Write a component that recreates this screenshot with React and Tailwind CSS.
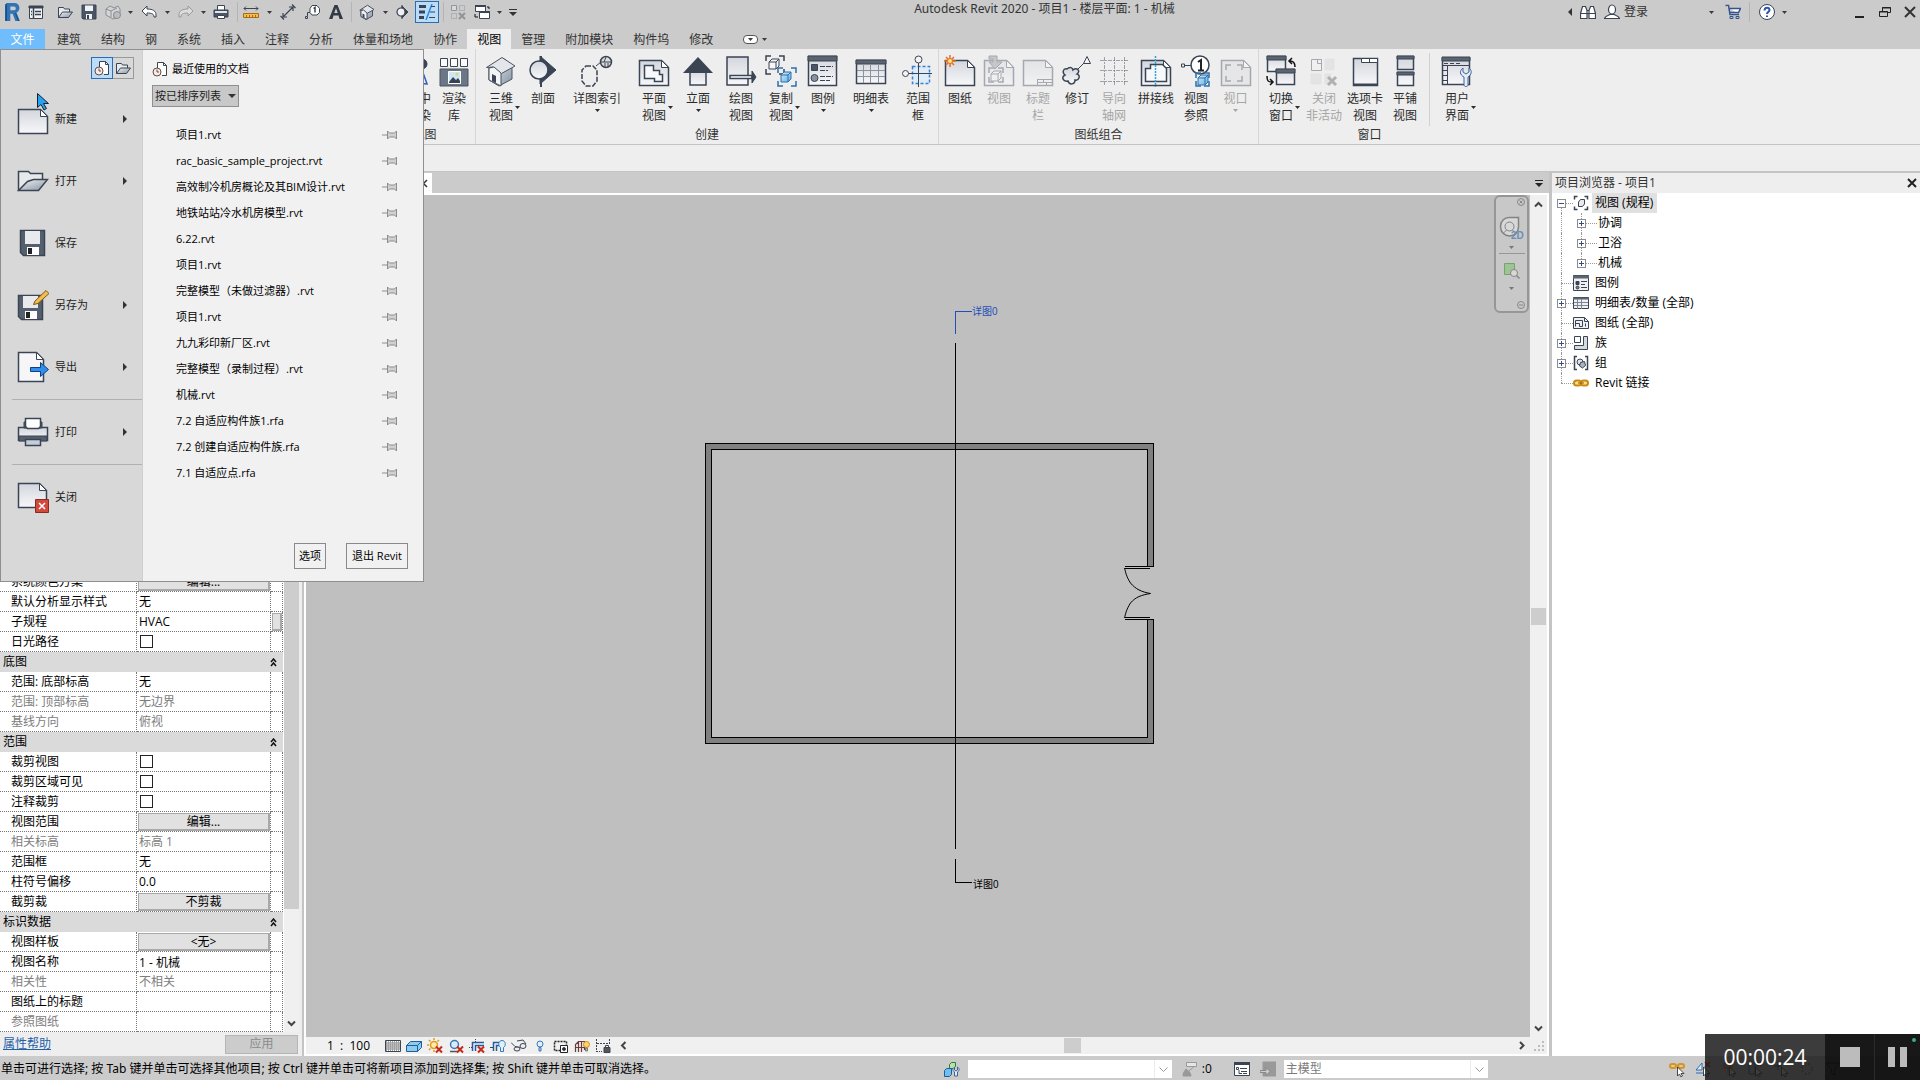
import React from 'react'

const INK = '#3b4453'
const SHEEN = 'url(#sheen)'

function Defs() {
  return (
    <svg className="absolute h-0 w-0" aria-hidden="true">
      <defs>
        <linearGradient id="sheen" x1="0" y1="0" x2="0" y2="1">
          <stop offset="0" stopColor="#d3d6dd" />
          <stop offset="1" stopColor="#f8f8fa" />
        </linearGradient>
        <linearGradient id="steel" x1="0" y1="0" x2="1" y2="1">
          <stop offset="0" stopColor="#f2f4f6" />
          <stop offset="1" stopColor="#8593a3" />
        </linearGradient>
        <linearGradient id="sky" x1="0" y1="0" x2="1" y2="1">
          <stop offset="0" stopColor="#d4ecfa" />
          <stop offset="1" stopColor="#5fb0e0" />
        </linearGradient>
      </defs>
    </svg>
  )
}

function Svg({ size = 16, box, className = '', children }) {
  const b = box || size
  return (
    <svg width={size} height={size} viewBox={`0 0 ${b} ${b}`} fill="none" stroke={INK} className={`shrink-0 ${className}`} aria-hidden="true">
      {children}
    </svg>
  )
}

const Caret = ({ className = 'text-[#3a3a3a]' }) => (
  <svg width="5" height="3" viewBox="0 0 5 3" className={`shrink-0 ${className}`} aria-hidden="true">
    <path d="M0 0h5L2.5 3z" fill="currentColor" />
  </svg>
)

/* ---------- shared shapes ---------- */
const House = () => (
  <>
    <path d="M4 13v12l10 6 13-7V12L20 4z" fill="url(#steel)" stroke="#4a5260" />
    <path d="M1.500 12.500L17 2.500l13 8.500-13.500 7.500L8 12z" fill="#e3e6ea" stroke="#4a5260" />
    <path d="M4 13l5-1 7 6v13l-12-6z" fill="#f3f4f6" stroke="#4a5260" />
    <path d="M7 19l4 2v7l-4-2z" fill="#3b4453" stroke="none" />
  </>
)
const Page = ({ fill = SHEEN }) => (
  <>
    <path d="M1.500 5.500h22l7 7v18h-29z" fill={fill} strokeWidth="1.500" />
    <path d="M23.500 5.500v7h7z" fill="#fff" />
  </>
)
const Corners = ({ x, y, s, c = INK, a = 5 }) => (
  <path d={`M${x} ${y + a}v-${a}h${a}M${x + s - a} ${y}h${a}v${a}M${x + s} ${y + s - a}v${a}h-${a}M${x + a} ${y + s}h-${a}v-${a}`} stroke={c} strokeWidth="1.500" />
)
const Cube = ({ x, y, fill = '#f4f5f7', c = INK }) => (
  <path d={`M${x} ${y + 3}l3-3h7v7l-3 3h-7zM${x} ${y + 3}h7v7M${x + 7} ${y + 3}l3-3`} fill={fill} stroke={c} />
)

/* ---------- ribbon icons, 32 px ---------- */
const ribbonIcons = {
  cloud: (
    <>
      <circle cx="19" cy="9" r="5" fill={INK} />
      <path d="M10 28c0-10 4-13 9-13l4 11 1 3z" fill="#e8eefc" stroke="#2d5cb8" strokeWidth="1.500" />
    </>
  ),
  gallery: (
    <>
      <path d="M2.500 3.500h7v8h-7zM12.500 3.500h7v8h-7zM22.500 3.500h7v8h-7z" fill="#fafafa" />
      <path d="M2 14h28v17H2z" fill="#6b7686" stroke="#4a5260" />
      <path d="M10.500 16.500h12v12h-12z" fill="#cfe6f7" stroke="#fff" />
      <path d="M11 27l4-5 3 3 2-2 2 3v2H11z" fill="#39424f" stroke="none" />
      <circle cx="19" cy="19" r="1.500" fill="#e6d463" stroke="none" />
    </>
  ),
  house: <House />,
  section: (
    <>
      <path d="M13 1l16 14L13 29z" fill={INK} />
      <path d="M14 1v31" strokeWidth="2" />
      <circle cx="12" cy="15" r="9" fill={SHEEN} strokeWidth="1.500" />
    </>
  ),
  callout: (
    <>
      <path d="M6 11h7l4 4v11l-4 5H6l-4-5V15z" strokeDasharray="5 1.500" strokeWidth="1.500" transform="translate(-1 0)" />
      <path d="M15 11l5-4" />
      <circle cx="25" cy="7" r="5.500" fill="#ddd" strokeWidth="1.500" />
      <path d="M20 7h10M25 2l-2 5M24 8v4M27 8v4" />
    </>
  ),
  plan: (
    <>
      <Page />
      <path d="M6.500 10.500h9v5h6v4h3v7h-8v-3h-10z" fill="#f7f8fa" strokeWidth="1.500" />
    </>
  ),
  elevation: (
    <>
      <path d="M8 15h16v15H8z" fill={SHEEN} strokeWidth="1.500" />
      <path d="M16 2L1 18h30z" fill={INK} stroke="none" />
    </>
  ),
  drafting: (
    <>
      <path d="M2 2h21v28H2z" fill={SHEEN} strokeWidth="1.500" />
      <path d="M5 20.500h22v3H5z" fill="#fff" strokeWidth="1.500" />
      <path d="M27 16l4 6-4 6z" fill={INK} />
    </>
  ),
  copy: (
    <>
      <Corners x={1} y={1} s={18} />
      <Cube x={4} y={4} />
      <Corners x={13} y={13} s={18} c="#2d6fae" />
      <Cube x={16} y={17} fill="url(#sky)" c="#2d6fae" />
    </>
  ),
  legend: (
    <>
      <path d="M1.500 1.500h28v29h-28z" fill={SHEEN} strokeWidth="1.500" />
      <path d="M1 1h29v5H1z" fill="#5c6470" />
      <path d="M4.500 9.500h6v6h-6z" fill="#4b5563" />
      <circle cx="7.500" cy="23" r="3.500" fill="#8a929e" />
      <path d="M13 11.500h13M13 15.500h8M13 21.500h13M13 25.500h10" strokeDasharray="5 1" />
    </>
  ),
  schedule: (
    <>
      <path d="M1.500 5.500h29v23h-29z" fill={SHEEN} strokeWidth="1.500" />
      <path d="M1 5h30v4H1z" fill="#5c6470" />
      <path d="M2 15.500h28M2 21.500h28M8.500 9v19M15.500 9v19M23.500 9v19" stroke="#8a93a0" />
    </>
  ),
  scope: (
    <>
      <path d="M10.500 11.500h17v17h-17z" fill="#dcecf9" stroke="#3d7fd0" strokeWidth="1.500" strokeDasharray="3 2" />
      <path d="M16.500 8v24M6 18.500h24" />
      <circle cx="16.500" cy="4.500" r="3.500" fill="#f4f4f4" />
      <circle cx="3.500" cy="18.500" r="3" fill="#f4f4f4" />
    </>
  ),
  sheet: (
    <>
      <Page />
      <path d="M6 0v12M0 6h12M2 2l8 8M10 2l-8 8" stroke="#e2702a" strokeWidth="1.500" />
      <circle cx="6" cy="6" r="2.500" fill="#ffe27a" stroke="#e2702a" />
    </>
  ),
  placeView: (
    <g opacity="0.400">
      <Page />
      <Corners x={6} y={13} s={14} />
      <Cube x={8} y={16} />
      <path d="M6 1h8v6h5l-7 7-6-7h4V4H6z" fill="#8b8f96" />
    </g>
  ),
  titleBlock: (
    <g opacity="0.400">
      <Page />
      <path d="M15 24.500h15M15 27.500h15M15.500 24v6M21.500 24v3M24.500 27v3" />
    </g>
  ),
  revision: (
    <>
      <path d="M16 15l9-9" />
      <path d="M26 1.500l-3.500 7h7z" fill="#f4f4f4" />
      <path d="M6 14c3-3 6-1 6 1 4-3 8 1 4 4 4 1 2 7-2 6 0 5-6 5-7 1-5 1-7-4-3-6-3-2-2-7 2-6z" fill={SHEEN} strokeWidth="1.500" />
    </>
  ),
  grid: (
    <g opacity="0.450">
      <path d="M2 5.500h28M2 15.500h28M2 26.500h28M6.500 2v28M16.500 2v28M26.500 2v28" strokeDasharray="4 1 2 1" />
    </g>
  ),
  matchline: (
    <>
      <Page />
      <path d="M5.500 26.500v-13h5v-4h12l4 4v13z" fill="#f7f8fa" strokeWidth="1.500" />
      <path d="M15.500 1v31" stroke="#2fa0d8" strokeWidth="1.500" strokeDasharray="2 1" />
    </>
  ),
  viewRef: (
    <>
      <path d="M4 10.500h8M1.500 9h3v3h-3z" />
      <circle cx="20" cy="10" r="9" fill="#fff" strokeWidth="1.500" />
      <path d="M18 7l3-2v10M18 15.500h6" strokeWidth="2" stroke="#222" />
      <Corners x={16} y={18} s={13} c="#2d6fae" />
      <Cube x={18} y={20} fill="url(#sky)" c="#2d6fae" />
    </>
  ),
  viewport: (
    <g opacity="0.400">
      <Page fill="#dcdcdc" />
      <Corners x={6} y={10} s={16} />
    </g>
  ),
  switchWin: (
    <>
      <path d="M2.500 1.500h18v15h-18z" fill={SHEEN} strokeWidth="1.500" />
      <path d="M2 1h19v4H2z" fill="#5c6470" />
      <path d="M11.500 14.500h18v15h-18z" fill={SHEEN} strokeWidth="1.500" />
      <path d="M11 14h19v4H11z" fill="#5c6470" />
      <path d="M30 12c0-5-2-6-5-6M27 3l-3 3 3 3M2 21c0 5 1 6 5 6M5 24l3 3-3 3" stroke="#111" strokeWidth="1.500" />
    </>
  ),
  closeWin: (
    <g opacity="0.400">
      <path d="M3.500 4.500h10v11h-10z" fill="#f3f3f3" />
      <path d="M9.500 4.500h4v4h-4z" />
      <path d="M17 4h9v11h-9zM3 19h10v10H3zM17 19h6v10h-6z" fill="#d5d5d5" stroke="#d5d5d5" />
      <path d="M20 22l8 8M28 22l-8 8" stroke="#555" strokeWidth="3" />
    </g>
  ),
  tabView: (
    <>
      <path d="M4.500 3.500h24v27h-24z" fill={SHEEN} strokeWidth="1.500" />
      <path d="M12.500 3.500h16v4h-16zM20.500 3.500v4" fill="#fff" />
      <path d="M4 29.500h25" strokeWidth="2" />
    </>
  ),
  tile: (
    <>
      <path d="M8.500 1.500h16v13h-16zM8.500 17.500h16v13h-16z" fill={SHEEN} strokeWidth="1.500" />
      <path d="M8 1h17v3H8zM8 17h17v3H8z" fill="#5c6470" />
    </>
  ),
  userUi: (
    <>
      <path d="M1.500 3.500h27v26h-27z" fill={SHEEN} strokeWidth="1.500" />
      <path d="M1 2h28v4H1z" fill="#5c6470" />
      <path d="M1 10.500h28M3 8.500h4M9 8.500h4M15 8.500h4M6.500 11v18M2 15.500h4M2 20.500h4M2 25.500h4" />
      <path d="M22 13v4l3 2 3-2v-4c4 3 2 7-1 9v8c0 2-4 2-4 0v-8c-4-2-5-6-1-9z" fill="#e6edf5" stroke="#41639c" />
    </>
  ),
}

/* ---------- quick access icons, 16 px ---------- */
const Chevron = ({ d }) => (
  <svg width="9" height="9" viewBox="0 0 9 9" fill="none" stroke="#444" strokeWidth="2" aria-hidden="true">
    <path d={d} />
  </svg>
)

const small = {
  logo: (
    <>
      <path d="M3 0h7c5.500 0 6 7 2 8.500L15 16h-4L8.500 9.500H6.500V16H2V2z" fill="#2f74b5" stroke="none" />
      <path d="M2 1h1.500v15H2z" fill="#174f86" stroke="none" />
      <path d="M6.500 3h3c2.500 0 2.500 3.500 0 3.500h-3z" fill="#cbcbcb" stroke="none" />
      <path d="M11 9l3 7" stroke="#174f86" />
    </>
  ),
  props: (
    <>
      <path d="M1.500 2.500h13v12h-13z" fill="#f3f3f3" />
      <path d="M1 2h14v2H1z" fill={INK} />
      <path d="M5.500 4v10M3 7.500h1M3 10.500h1M7 7.500h6M7 10.500h6" strokeWidth="1.500" />
    </>
  ),
  open: (
    <>
      <path d="M1.500 13.500v-10h5l1 1.500h5v3" fill="#e9ebee" />
      <path d="M1.500 13.500l4-5.500h10l-4 5.500z" fill="url(#steel)" />
    </>
  ),
  save: (
    <>
      <path d="M1 1h14v14H2l-1-1z" fill="#4b5563" />
      <path d="M4 1.500h8v5.500H4zM5 10h6v5H5z" fill="#f0f2f4" stroke="none" />
      <path d="M6 11h2v4H6z" fill={INK} stroke="none" />
    </>
  ),
  sync: (
    <g opacity="0.450">
      <path d="M1 5l4-3 4 2 4-2 2 3v4l-3 5-4 1-7-4z" fill="#e2e2e2" />
      <path d="M1 5l5 2v6M6 7l6-3M9 9v5" />
      <circle cx="12" cy="11" r="3.500" fill="#aaa" />
    </g>
  ),
  undo: <path d="M1 7l5-5v3c6 0 9 2 9 6v2h-2c0-3-2-4-7-4v3z" fill="#fff" />,
  redo: <path d="M15 7l-5-5v3c-6 0-9 2-9 6v2h2c0-3 2-4 7-4v3z" fill="#ddd" stroke="#9a9a9a" />,
  print: (
    <>
      <path d="M4.500 1.500h7v5h-7z" fill="#fff" />
      <path d="M1 6h14v7H1z" fill="#4b5563" />
      <path d="M2 7h12v2H2z" fill="#e2e5e9" stroke="none" />
      <path d="M4.500 11.500h7v3h-7z" fill="#fff" />
    </>
  ),
  measure: (
    <>
      <path d="M1 4.500h14M3 2.500l-2 2 2 2M13 2.500l2 2-2 2" />
      <path d="M.500 9.500h15v4H.500z" fill="#f5bd4a" stroke="#a86a12" />
      <path d="M3.500 11v2M6.500 11v2M9.500 11v2M12.500 11v2" stroke="#a86a12" />
    </>
  ),
  dim: <path d="M3 13L13 3M9 3h4v4M3 9v4h4M0.500 12l3.500 3.500M12 .500L15.500 4" strokeWidth="1.200" />,
  tag: (
    <>
      <path d="M1.500 12.500h2v2h-2zM3.500 12V8.500H6" />
      <path d="M8 1.500h5l2.500 3v4L13 11H8L6 8.500v-4z" fill="#fff" />
      <path d="M9.500 4.500L11 3.500v5" strokeWidth="1.500" />
    </>
  ),
  text: <path d="M1 15L6.500 1h3L15 15h-3.500l-1-3.500h-5l-1 3.500zM6.300 9h3.400L8 4z" fill="#333a45" stroke="none" />,
  section: (
    <>
      <path d="M8 2l6 6-6 6z" fill={INK} />
      <path d="M8 1v14" />
      <circle cx="7" cy="8" r="4" fill="#eef0f2" strokeWidth="1.200" />
    </>
  ),
  thin: (
    <>
      <path d="M0 2.500h7M0 8h6M0 13.500h5" strokeWidth="3" />
      <path d="M7 16L13 0" stroke="#2f8ae0" strokeWidth="1.500" />
      <path d="M12 2.500h4M11 8h5M10 13.500h6" />
    </>
  ),
  closeHidden: (
    <g opacity="0.400">
      <path d="M1.500 1.500h5v5h-5z" fill="#eee" />
      <path d="M9.500 1.500h5v5h-5zM1.500 9.500h5v5h-5z" strokeDasharray="1 1" />
      <path d="M9 9l6 6M15 9l-6 6" strokeWidth="2" />
    </g>
  ),
  switchWin: (
    <>
      <path d="M1.500 1.500h10v6h-10z" fill="#fff" />
      <path d="M5.500 7.500h10v7h-10z" fill="#fff" />
      <path d="M1 2h11M5 8h11" strokeWidth="2" />
      <path d="M1 10v3h3M15 5V3h-2" stroke="#111" />
    </>
  ),
  doc: (
    <>
      <path d="M5.500 7V1.500h6l3 3v10H10" fill="#fff" />
      <path d="M11.500 1.500v3h3" />
      <circle cx="5" cy="11" r="4" fill="#f4ece6" stroke="#6a4a40" />
      <path d="M5 8.500V11h2" stroke="#6a4a40" />
    </>
  ),
}

const QButton = ({ icon, label, className = 'w-6' }) => (
  <button aria-label={label} className={`flex h-[22px] shrink-0 items-center justify-center ${className}`}>
    <Svg>{small[icon]}</Svg>
  </button>
)
const QCaret = ({ label, className = '' }) => (
  <button aria-label={label} className={`flex h-[22px] w-[10px] shrink-0 items-center justify-center ${className}`}>
    <Caret />
  </button>
)
const QSep = ({ className }) => <span className={`h-5 w-px shrink-0 bg-[#b4b4b4] ${className}`} />

function TitleBar() {
  return (
    <header className="flex h-[29px] shrink-0 items-start bg-[#cbcbcb] pt-px">
      <div className="flex shrink-0 items-center">
        <button aria-label="Revit" className="flex h-[22px] w-6 items-center justify-center">
          <Svg size={18} box={16}>{small.logo}</Svg>
        </button>
        <QButton icon="props" label="属性" className="ml-0.5 w-5" />
        <QButton icon="open" label="打开" className="ml-[7px] w-6" />
        <QButton icon="save" label="保存" />
        <QButton icon="sync" label="同步" />
        <QCaret label="同步选项" />
        <QButton icon="undo" label="放弃" className="ml-0.5 w-6" />
        <QCaret label="放弃列表" className="ml-px" />
        <QButton icon="redo" label="重做" className="ml-0.5 w-6" />
        <QCaret label="重做列表" />
        <QButton icon="print" label="打印" className="ml-px w-6" />
        <QSep className="ml-1" />
        <QButton icon="measure" label="测量" className="ml-px w-6" />
        <QCaret label="测量选项" className="ml-px" />
        <QButton icon="dim" label="对齐尺寸标注" className="ml-0.5 w-6" />
        <QButton icon="tag" label="按类别标记" />
        <QButton icon="text" label="文字" />
        <QSep className="ml-[3px]" />
        <button aria-label="默认三维视图" className="ml-[3px] flex h-[22px] w-6 items-center justify-center">
          <Svg size={16} box={32}>
            <g strokeWidth="2"><House /></g>
          </Svg>
        </button>
        <QCaret label="三维视图选项" className="ml-px" />
        <QButton icon="section" label="剖面" />
        <QButton icon="thin" label="细线" className="ml-px w-6 border border-[#2c6cb0] bg-[#b9dcfb]" />
        <QSep className="ml-1" />
        <QButton icon="closeHidden" label="关闭非活动视图" className="ml-0.5 w-6" />
        <QButton icon="switchWin" label="切换窗口" />
        <QCaret label="窗口列表" />
        <button aria-label="自定义快速访问工具栏" className="ml-px flex h-[22px] w-4 flex-col items-center justify-center gap-0.5">
          <span className="h-px w-2 bg-[#333]" />
          <svg width="8" height="4" viewBox="0 0 8 4"><path d="M0 0h8L4 4z" fill="#333" /></svg>
        </button>
      </div>
      <h1 className='min-w-0 flex-1 truncate text-center font-["Noto_Sans","Noto_Sans_CJK_SC",sans-serif] text-xs leading-4 text-[#333]'>
        Autodesk Revit 2020 - 项目1 - 楼层平面: 1 - 机械
      </h1>
      <div className="flex h-[22px] shrink-0 items-center text-[#333]">
        <svg width="4" height="8" viewBox="0 0 4 8" className="mr-2" aria-hidden="true"><path d="M4 0v8L0 4z" fill="#333" /></svg>
        <button aria-label="搜索" className="w-6">
          <Svg>
            <path d="M.500 14.500v-5l2-7h3l1.500 4v8zM15.500 14.500v-5l-2-7h-3L9 6.500v8zM7 6.500h2v3H7zM.500 9.500H7M9 9.500h6.500" fill="#fff" strokeWidth="1.200" />
          </Svg>
        </button>
        <button className="flex items-center gap-1 text-xs">
          <Svg>
            <ellipse cx="8" cy="5.500" rx="3.500" ry="4.500" fill="#fff" strokeWidth="1.200" />
            <path d="M.500 14.500c1-3 4-3 5.500-4h4c1.500 1 4.500 1 5.500 4z" fill="#fff" strokeWidth="1.200" />
          </Svg>
          登录
        </button>
        <button aria-label="登录选项" className="ml-[61px] flex h-5 w-2 items-center"><Caret /></button>
        <button aria-label="App Store" className="ml-2">
          <Svg>
            <path d="M.500 1.500h3l1.500 9h9M4 4.500h11.500l-2 4H5" fill="#fff" stroke="#35548c" strokeWidth="1.500" />
            <path d="M5 12.500h3v2H5zM11 12.500h3v2h-3z" stroke="#35548c" />
          </Svg>
        </button>
        <span className="ml-2 h-5 w-px bg-[#b4b4b4]" />
        <button aria-label="帮助" className="ml-[9px]">
          <Svg>
            <circle cx="8" cy="8" r="7.500" fill="#fff" />
            <path d="M5.500 6.500c0-4 5-3.500 5-.500 0 2-2.500 2-2.500 4M8 11.500v1.500" stroke="#2b55a8" strokeWidth="2" />
          </Svg>
        </button>
        <button aria-label="帮助选项" className="ml-[7px] flex h-5 w-2 items-center"><Caret /></button>
        <button aria-label="最小化" className="ml-[62px] w-5">
          <Svg size={14}><path d="M3 12h9" stroke="#222" strokeWidth="2" /></Svg>
        </button>
        <button aria-label="还原" className="ml-1.5 w-5">
          <Svg size={14}>
            <path d="M1.500 6.500h8v5h-8zM4.500 6V2.500h8v5H10" stroke="#222" />
            <path d="M1 7h9M4 3h9" stroke="#222" />
          </Svg>
        </button>
        <button aria-label="关闭" className="mr-1 ml-1.5 w-3">
          <Svg size={12}><path d="M1 1l10 10M11 1L1 11" stroke="#333" strokeWidth="2" /></Svg>
        </button>
      </div>
    </header>
  )
}

const TABS = ['建筑', '结构', '钢', '系统', '插入', '注释', '分析', '体量和场地', '协作', '视图', '管理', '附加模块', '构件坞', '修改']

function TabStrip() {
  return (
    <nav className="flex h-5 shrink-0 bg-[#cbcbcb] text-xs leading-[22px] text-[#333]">
      <button className="mr-0.5 w-[45px] bg-[#6fbdfc] text-white">文件</button>
      {TABS.map((t) => (
        <button key={t} className={t === '视图' ? 'bg-[#eeeeee] px-2.5 text-black' : 'px-2.5'}>{t}</button>
      ))}
      <button aria-label="最小化功能区" className="ml-5 flex items-center gap-1">
        <span className="flex h-[9px] w-[15px] items-center justify-center rounded-sm border border-[#555] bg-white">
          <Caret />
        </span>
        <Caret />
      </button>
    </nav>
  )
}

function RibbonButton({ icon, lines, width, drop, off }) {
  return (
    <button disabled={off} className={`flex shrink-0 flex-col items-center ${width} ${off ? 'text-[#a6a6a6]' : 'text-[#2b2b2b]'}`}>
      <Svg size={32}>{ribbonIcons[icon]}</Svg>
      <span className="relative mt-[3px] text-xs leading-[17px] whitespace-nowrap">
        {lines.map((l) => (
          <span key={l} className="block">{l}</span>
        ))}
        {drop && lines.length > 1 && <span className="absolute top-4 left-full ml-0.5"><Caret className="text-current" /></span>}
      </span>
      {drop && lines.length === 1 && <span className="mt-0.5"><Caret className="text-current" /></span>}
    </button>
  )
}

function RibbonGroup({ title, children, last }) {
  return (
    <section className={`flex shrink-0 flex-col justify-between pt-1.5 pb-px ${last ? '' : 'border-r border-[#d6d6d6]'}`}>
      <div className="flex">{children}</div>
      <h2 className="text-center text-xs leading-[17px] text-[#333]">{title}</h2>
    </section>
  )
}

function Ribbon() {
  return (
    <div className="flex h-24 shrink-0 border-b border-[#c4c4c4] bg-[#eeeeee] pl-[350px]">
      <RibbonGroup title="演示视图">
        <div className="w-[54px]" />
        <RibbonButton icon="cloud" lines={['云中', '渲染']} width="w-[30px]" />
        <RibbonButton icon="gallery" lines={['渲染', '库']} width="w-10" />
        <div className="w-px" />
      </RibbonGroup>
      <RibbonGroup title="创建">
        <RibbonButton icon="house" lines={['三维', '视图']} width="w-[50px]" drop />
        <RibbonButton icon="section" lines={['剖面']} width="w-[34px]" />
        <RibbonButton icon="callout" lines={['详图索引']} width="w-[74px]" drop />
        <RibbonButton icon="plan" lines={['平面', '视图']} width="w-[40px]" drop />
        <RibbonButton icon="elevation" lines={['立面']} width="w-[48px]" drop />
        <RibbonButton icon="drafting" lines={['绘图', '视图']} width="w-[38px]" />
        <RibbonButton icon="copy" lines={['复制', '视图']} width="w-[42px]" drop />
        <RibbonButton icon="legend" lines={['图例']} width="w-[42px]" drop />
        <RibbonButton icon="schedule" lines={['明细表']} width="w-[54px]" drop />
        <RibbonButton icon="scope" lines={['范围', '框']} width="w-[40px]" />
      </RibbonGroup>
      <RibbonGroup title="图纸组合">
        <RibbonButton icon="sheet" lines={['图纸']} width="w-[42px]" />
        <RibbonButton icon="placeView" lines={['视图']} width="w-[36px]" off />
        <RibbonButton icon="titleBlock" lines={['标题', '栏']} width="w-[42px]" off />
        <RibbonButton icon="revision" lines={['修订']} width="w-[36px]" />
        <RibbonButton icon="grid" lines={['导向', '轴网']} width="w-[38px]" off />
        <RibbonButton icon="matchline" lines={['拼接线']} width="w-[46px]" />
        <RibbonButton icon="viewRef" lines={['视图', '参照']} width="w-[34px]" />
        <RibbonButton icon="viewport" lines={['视口']} width="w-[45px]" drop off />
      </RibbonGroup>
      <RibbonGroup title="窗口" last>
        <RibbonButton icon="switchWin" lines={['切换', '窗口']} width="w-[44px]" drop />
        <RibbonButton icon="closeWin" lines={['关闭', '非活动']} width="w-[42px]" off />
        <RibbonButton icon="tabView" lines={['选项卡', '视图']} width="w-[40px]" />
        <RibbonButton icon="tile" lines={['平铺', '视图']} width="w-[40px]" />
        <span className="mx-1 -my-0.5 w-px bg-[#d0d0d0]" />
        <RibbonButton icon="userUi" lines={['用户', '界面']} width="w-[46px]" drop />
      </RibbonGroup>
    </div>
  )
}

/* ---------- application menu ---------- */
const menuIcons = {
  new: (
    <>
      <path d="M1.500 6.500h22l7 7v17h-29z" fill={SHEEN} strokeWidth="1.500" />
      <path d="M23.500 6.500v7h7z" fill="#fff" />
    </>
  ),
  open: (
    <>
      <path d="M1.500 25.500v-19h10l2 2h12v7" fill="#e6e9ec" strokeWidth="1.500" />
      <path d="M1.500 25.500l9-9 6-2h14l-9 11z" fill="url(#steel)" strokeWidth="1.500" />
    </>
  ),
  save: (
    <>
      <path d="M3.500 3.500h24v25h-21l-3-3z" fill="#55606f" strokeWidth="1.500" />
      <path d="M8 4h15v13H8z" fill="#e8eaee" stroke="none" />
      <path d="M10 20h12v8H10z" fill="#fff" stroke="none" />
      <path d="M11 21h4v6h-4z" fill="#222" stroke="none" />
    </>
  ),
  saveAs: (
    <>
      <path d="M1.500 6.500h24v24h-21l-3-3z" fill="#55606f" strokeWidth="1.500" />
      <path d="M6 7h15v12H6z" fill="#e8eaee" stroke="none" />
      <path d="M8 22h12v8H8z" fill="#fff" stroke="none" />
      <path d="M9 23h4v6H9z" fill="#222" stroke="none" />
      <path d="M18 12L29 1.500l3 3L21 14.500l-4.500 1z" fill="#f3bd4b" stroke="#7d5520" />
    </>
  ),
  export: (
    <>
      <path d="M1.500 1.500h18l7 7v22h-25z" fill="#f6f6f8" strokeWidth="1.500" />
      <path d="M19.500 1.500v7h7z" fill="#fff" />
      <path d="M13.500 16.500h10v-5l8 7-8 7v-5h-10z" fill="#2f8df0" stroke="#123f7c" />
    </>
  ),
  print: (
    <>
      <path d="M1.500 11.500h29v13h-29z" fill="url(#sheen)" strokeWidth="1.500" />
      <path d="M2 20h28v5H2z" fill="#55606f" />
      <path d="M7 6h18v6H7z" fill="#55606f" />
      <path d="M8.500 2.500h15v8l-2 2h-11l-2-2z" fill="#fff" strokeWidth="1.500" />
      <path d="M8.500 23.500h15v6h-15z" fill="#c4ced9" strokeWidth="1.500" />
    </>
  ),
  close: (
    <>
      <path d="M1.500 2.500h21l7 7v17h-28z" fill={SHEEN} strokeWidth="1.500" />
      <path d="M22.500 2.500v7h7z" fill="#fff" />
      <path d="M18.500 18.500h13v13h-13z" fill="#d0493c" stroke="#8c2a20" />
      <path d="M22 22l6 6M28 22l-6 6" stroke="#fff" strokeWidth="1.500" />
    </>
  ),
}

function MenuItem({ icon, label, arrow }) {
  return (
    <button className="flex h-[62px] w-full items-center pl-4 text-left text-[11px] text-[#222]">
      <Svg size={32}>{menuIcons[icon]}</Svg>
      <span className="ml-1.5 flex-1">{label}</span>
      {arrow && (
        <svg width="4" height="8" viewBox="0 0 4 8" className="mr-[15px]" aria-hidden="true"><path d="M0 0v8l4-4z" fill="#333" /></svg>
      )}
    </button>
  )
}

const RECENT = [
  '项目1.rvt', 'rac_basic_sample_project.rvt', '高效制冷机房概论及其BIM设计.rvt', '地铁站站冷水机房模型.rvt', '6.22.rvt', '项目1.rvt',
  '完整模型（未做过滤器）.rvt', '项目1.rvt', '九九彩印新厂区.rvt', '完整模型（录制过程）.rvt', '机械.rvt', '7.2 自适应构件族1.rfa',
  '7.2 创建自适应构件族.rfa', '7.1 自适应点.rfa',
]

function AppMenu() {
  return (
    <div className="absolute top-[49px] left-0 z-10 flex h-[533px] w-[424px] border border-[#8f8f8f] bg-[#f1f1f1] text-[11px]">
      <div className="w-[142px] shrink-0 border-r border-[#cfcfcf] bg-[#d8d8d8]">
        <div className="mt-[7px] mr-2 mb-[9px] flex h-[22px] justify-end">
          <button aria-label="最近使用的文档" className="flex w-[22px] items-center justify-center border border-[#2c6cb0] bg-[#b9dcfb]"><Svg>{small.doc}</Svg></button>
          <button aria-label="打开的文档" className="flex w-[21px] items-center justify-center border border-l-0 border-[#999]"><Svg>{small.open}</Svg></button>
        </div>
        <MenuItem icon="new" label="新建" arrow />
        <MenuItem icon="open" label="打开" arrow />
        <MenuItem icon="save" label="保存" />
        <MenuItem icon="saveAs" label="另存为" arrow />
        <MenuItem icon="export" label="导出" arrow />
        <hr className="my-px ml-[11px] border-[#b0b0b0]" />
        <MenuItem icon="print" label="打印" arrow />
        <hr className="my-px ml-[11px] border-[#b0b0b0]" />
        <MenuItem icon="close" label="关闭" />
      </div>
      <div className="flex flex-1 flex-col pl-[9px]">
        <h2 className="mt-[11px] flex h-4 items-center gap-1 text-black"><Svg>{small.doc}</Svg>最近使用的文档</h2>
        <button className="mt-2 flex h-[22px] w-[87px] items-center justify-between border border-[#8f8f8f] bg-[#c8c8c8] pr-0.5 pl-0.5 text-[#222]">
          按已排序列表
          <svg width="8" height="4" viewBox="0 0 8 4" aria-hidden="true"><path d="M0 0h8L4 4z" fill="#333" /></svg>
        </button>
        <ul className="mt-[15px]">
          {RECENT.map((name, i) => (
            <li key={i} className="flex h-[26px] items-center justify-between pr-[25px] pl-6 text-black">
              <a href="#" className="whitespace-nowrap">{name}</a>
              <button aria-label={`固定 ${name}`}>
                <svg width="16" height="10" viewBox="0 0 16 10" fill="none" stroke="#8d8d8d" aria-hidden="true">
                  <path d="M0 5h5" />
                  <path d="M5.500 1v8l2-2h5l2 2V1l-2 2h-5z" fill="#d0d0d0" />
                </svg>
              </button>
            </li>
          ))}
        </ul>
        <div className="mt-auto mr-[15px] mb-3 flex justify-end gap-5">
          <button className="h-[26px] w-8 border border-[#8a8a8a] text-black">选项</button>
          <button className="h-[26px] w-[62px] border border-[#8a8a8a] whitespace-nowrap text-black">退出 Revit</button>
        </div>
      </div>
    </div>
  )
}

/* ---------- property palette ---------- */
const PROPS = [
  ['系统颜色方案', 'button', '编辑...'],
  ['默认分析显示样式', 'text', '无'],
  ['子规程', 'text', 'HVAC', false, true],
  ['日光路径', 'check'],
  ['底图', 'head'],
  ['范围: 底部标高', 'text', '无'],
  ['范围: 顶部标高', 'text', '无边界', true],
  ['基线方向', 'text', '俯视', true],
  ['范围', 'head'],
  ['裁剪视图', 'check'],
  ['裁剪区域可见', 'check'],
  ['注释裁剪', 'check'],
  ['视图范围', 'button', '编辑...'],
  ['相关标高', 'text', '标高 1', true],
  ['范围框', 'text', '无'],
  ['柱符号偏移', 'input', '0.0'],
  ['截剪裁', 'button', '不剪裁'],
  ['标识数据', 'head'],
  ['视图样板', 'button', '<无>'],
  ['视图名称', 'input', '1 - 机械'],
  ['相关性', 'text', '不相关', true],
  ['图纸上的标题', 'input', ''],
  ['参照图纸', 'text', '', true],
]

const CELL = 'h-5 border-b border-r border-dotted border-[#777] p-0'

function PropRow({ row }) {
  const [name, kind, value, off, handle] = row
  if (kind === 'head') {
    return (
      <tr>
        <th colSpan={3} className="h-5 bg-[#dadada] p-0 font-normal">
          <div className="flex h-5 items-center justify-between pr-[6px] pl-[3px]">
            {name}
            <svg width="7" height="9" viewBox="0 0 7 9" fill="none" stroke="#111" strokeWidth="1.500" aria-hidden="true"><path d="M1 4l2.500-3L6 4M1 8l2.500-3L6 8" /></svg>
          </div>
        </th>
      </tr>
    )
  }
  return (
    <tr className={off ? 'text-[#7d7d7d]' : 'text-black'}>
      <th scope="row" className={`${CELL} pl-[11px] text-left font-normal`}>{name}</th>
      <td className={CELL}>
        {kind === 'text' && <span className="ml-0.5">{value}</span>}
        {kind === 'input' && <input aria-label={name} defaultValue={value} className="block h-[19px] w-full bg-transparent pl-0.5 outline-none" />}
        {kind === 'check' && <input type="checkbox" aria-label={name} className="mx-[3px] my-[3px] block size-[13px] appearance-none border border-[#222] bg-white" />}
        {kind === 'button' && <button className="ml-px block h-[18px] w-[132px] border-t border-r-2 border-b-2 border-l border-[#a8a8a8] bg-[#e1e1e1] leading-[15px]">{value}</button>}
      </td>
      <td className={CELL}>
        {handle && <span className="ml-px block h-[18px] w-[10px] border-t border-r-2 border-b-2 border-l border-[#a8a8a8] bg-[#e1e1e1]" />}
      </td>
    </tr>
  )
}

function PropertyPalette() {
  return (
    <aside className="flex w-[304px] shrink-0 flex-col border-r-2 border-[#c4c4c4] bg-[#eeeeee] text-xs leading-[18px]">
      <div className="flex min-h-0 flex-1">
        <div className="flex w-[284px] flex-col justify-end overflow-hidden bg-white">
          <table className="w-[283px] table-fixed border-separate border-spacing-0">
            <colgroup>
              <col className="w-[137px]" />
              <col className="w-[134px]" />
              <col className="w-[12px]" />
            </colgroup>
            <tbody>
              {PROPS.map((r) => <PropRow key={r[0]} row={r} />)}
            </tbody>
          </table>
        </div>
        <div className="flex w-[15px] flex-col bg-[#f0f0f0]">
          <div className="flex-1 bg-[#cdcdcd]" />
          <div className="flex h-[123px] items-end justify-center pb-1"><Chevron d="M1 2.500l3.500 3.500L8 2.500" /></div>
        </div>
      </div>
      <div className="flex h-6 shrink-0 items-center justify-between pr-1 pl-[3px]">
        <a href="#" className="text-[#1f5fa8] underline">属性帮助</a>
        <button disabled className="h-[19px] w-[73px] border border-[#b5b5b5] bg-[#cccccc] leading-4 text-[#8a8a8a]">应用</button>
      </div>
    </aside>
  )
}

/* ---------- drawing area ---------- */
function FloorPlan() {
  return (
    <svg viewBox="306 195 1224 842" className="block h-full w-full" fill="none" stroke="#000" shapeRendering="crispEdges" role="img" aria-label="楼层平面">
      <path d="M1153.500 566.500V443.500H705.500V743.500H1153.500V619.500H1147.500V737.500H711.500V449.500H1147.500V566.500Z" fill="#808080" />
      <path d="M1124.500 566.500h29M1124.500 568.500h25M1124.500 619.500h29M1124.500 617.500h25" />
      <path d="M1124.500 568c1 4 2 9 6 15 5 6 11 9 20 10.500M1124.500 618c1-4 2-9 6-15 5-6 11-8 20-9.500" shapeRendering="auto" />
      <path d="M955.500 343V849M955.500 859V882.500H972" />
      <path d="M955.500 334V311.500H972" stroke="#2350b8" />
      <g stroke="none" fontSize="10" fontFamily='"Liberation Sans", "Noto Sans CJK SC", sans-serif'>
        <text x="972" y="315" fill="#2350b8">详图0</text>
        <text x="973" y="888" fill="#000">详图0</text>
      </g>
    </svg>
  )
}

function NavBar() {
  return (
    <div className="absolute top-0 right-px flex h-[118px] w-[35px] flex-col items-center rounded-md border-2 border-[#969696] bg-[#c8c8c8]">
      <button aria-label="关闭导航栏" className="mt-px mr-0.5 self-end">
        <Svg size={8}><circle cx="4" cy="4" r="3.500" stroke="#888" /><path d="M2.500 2.500l3 3M5.500 2.500l-3 3" stroke="#888" /></Svg>
      </button>
      <button aria-label="二维控制盘" className="mt-2.5">
        <svg width="26" height="24" viewBox="0 0 26 24" fill="none" stroke="#828282" aria-hidden="true">
          <path d="M10 1.500h9.500V11c0 5-4 9-9 9s-9-4-9-9.500 4-9 8.500-9z" fill="#d8d8d8" strokeWidth="1.500" />
          <circle cx="10.500" cy="10.500" r="4.500" />
          <path d="M7.500 14l-3 3M13.500 14l2 2" />
          <text x="12" y="23" fontSize="10" fontWeight="700" fill="#6d8fb5" stroke="none" fontFamily="Liberation Sans">2D</text>
        </svg>
      </button>
      <span className="mt-1.5"><Caret className="text-[#777]" /></span>
      <hr className="mt-1 w-[26px] border-[#979797]" />
      <button aria-label="缩放" className="mt-2">
        <Svg size={17}>
          <path d="M1.500 1.500h10v11h-10z" fill="#9cc594" stroke="#7aa072" />
          <circle cx="11" cy="11" r="3.500" fill="#d8d8d8" stroke="#858585" />
          <path d="M13.500 13.500l3 3" stroke="#858585" strokeWidth="1.500" />
        </Svg>
      </button>
      <span className="mt-2"><Caret className="text-[#777]" /></span>
      <button aria-label="自定义导航栏" className="mt-auto mr-0.5 mb-0.5 self-end">
        <Svg size={8}><circle cx="4" cy="4" r="3.500" stroke="#888" /><path d="M2 4h4" stroke="#888" /></Svg>
      </button>
    </div>
  )
}

const BULB = 'M10.500 9.500c-3-2-2-7 1.500-7s4.500 5 1.500 7v4h-3z'
const RED_X = <path d="M9 8.500l6 6M15 8.500l-6 6" stroke="#c22a1c" strokeWidth="2" />
const VIEW_CONTROLS = [
  ['详细程度', <><path d="M.500 2.500h15v11h-15z" fill="#fff" /><path d="M1 4h14M1 6h14M1 8h14M1 10h14M1 12h14" strokeDasharray="1 1" stroke="#444" /><path d="M2 5h13M2 7h13M2 9h13M2 11h13" strokeDasharray="1 1" stroke="#777" /></>],
  ['视觉样式', <><path d="M.500 7.500l4-4h11v6l-4 4H.500z" fill="#8fcbee" stroke="#1f5e96" /><path d="M.500 7.500h11v6M11.500 7.500l4-4" stroke="#1f5e96" /></>],
  ['日光路径', <><circle cx="7" cy="7" r="3.500" fill="#ffe9a8" stroke="#e09a20" strokeWidth="1.500" /><path d="M7 0v2M7 12v2M0 7h2M2 2l1.500 1.500M12 2l-1.500 1.500M2 12l1.500-1.500" stroke="#e09a20" strokeWidth="1.500" />{RED_X}</>],
  ['阴影', <><circle cx="6.500" cy="6.500" r="4" fill="#d8ebf8" stroke="#3b78b8" strokeWidth="1.500" /><path d="M2 13.500h7" stroke="#555" strokeWidth="1.500" />{RED_X}</>],
  ['裁剪视图', <><path d="M3.500 13V4.500H15M6.500 13V7.500H15" stroke="#245c9c" strokeWidth="1.500" /><path d="M0 9.500h3M6.500 1v3" strokeDasharray="1 1" />{RED_X}</>],
  ['显示裁剪区域', <><path d="M3.500 13V4.500H9M6.500 13V7.500H9" stroke="#245c9c" strokeWidth="1.500" /><path d="M0 9.500h3" /><path d={BULB} fill="#dff0fb" stroke="#3b78b8" /></>],
  ['临时隐藏', <><path d="M0 4.500l4 4 5 1M6 3l6-1 3 4" /><ellipse cx="6" cy="11" rx="3" ry="2" fill="#eee" /><ellipse cx="12" cy="8" rx="3" ry="2.500" fill="#eee" /></>],
  ['显示隐藏的图元', <><circle cx="8" cy="6" r="3" fill="#dff0fb" stroke="#3b78b8" /><path d="M7 9.500h2v3.500H7z" fill="#bcd" stroke="#3b78b8" /></>],
  ['临时视图属性', <><path d="M1.500 3.500h12v9h-12z" strokeDasharray="2 1" strokeWidth="1.500" stroke="#222" /><path d="M7.500 7.500h7v7h-7z" fill="#fff" stroke="#222" /><circle cx="11" cy="11" r="1.500" fill="#222" /></>],
  ['分析模型', <><path d="M1.500 14V6.500l3-3h6V12M1 9.500h9M4.500 4v10M7.500 4v10" stroke="#6b3a3a" strokeWidth="1.200" /><circle cx="12.500" cy="6.500" r="3" fill="#ffd56a" stroke="#d18a18" /><path d="M11.500 10h2v3h-2z" fill="#bbb" stroke="#777" /></>],
  ['显示约束', <><path d="M1.500 1v13M14.500 1v5M2 5.500h12" strokeDasharray="2 1" /><path d="M2 13.500h6" strokeDasharray="1 1" /><path d="M9 9.500h6v5H9z" fill="#555" /><path d="M10.500 9V7.500h3V9" /></>],
]

function ViewArea() {
  return (
    <main className="flex min-w-0 flex-1 flex-col">
      <div className="flex h-[22px] shrink-0 items-end justify-between border-t border-[#c4c4c4] bg-[#cbcbcb]">
        <button aria-label="关闭视图选项卡" className="flex h-5 w-32 items-center justify-end bg-white pr-1">
          <Svg size={9}><path d="M1 1l7 7M8 1L1 8" stroke="#333" strokeWidth="1.500" /></Svg>
        </button>
        <button aria-label="选项卡列表" className="mr-0.5 flex h-5 w-4 flex-col items-center justify-center gap-0.5">
          <span className="h-px w-2 bg-[#222]" />
          <svg width="8" height="4" viewBox="0 0 8 4"><path d="M0 0h8L4 4z" fill="#222" /></svg>
        </button>
      </div>
      <div className="flex min-h-0 flex-1 flex-col border-2 border-white">
        <div className="flex min-h-0 flex-1">
          <div className="relative min-w-0 flex-1 overflow-hidden bg-[#bfbfbf]">
            <FloorPlan />
            <NavBar />
          </div>
          <div className="flex w-[17px] flex-col items-center justify-between bg-[#f0f0f0] pt-[5px] pb-1">
            <Chevron d="M1 6.500L4.500 3 8 6.500" />
            <div className="h-[17px] w-[15px] bg-[#cdcdcd]" />
            <Chevron d="M1 2.500l3.500 3.500L8 2.500" />
          </div>
        </div>
        <div className="flex h-[17px] shrink-0 items-center bg-[#f0f0f0]">
          <button className="w-[79px] pl-[21px] text-left text-xs leading-4 whitespace-nowrap text-black">1 &nbsp;: &nbsp;100</button>
          <div className="flex gap-[5px]">
            {VIEW_CONTROLS.map(([label, art]) => (
              <button key={label} aria-label={label}><Svg>{art}</Svg></button>
            ))}
          </div>
          <div className="ml-2 flex flex-1 items-center justify-between">
            <Chevron d="M6.500 1L3 4.500 6.500 8" />
            <div className="h-[15px] w-[17px] bg-[#cdcdcd]" />
            <Chevron d="M3 1l3.500 3.500L3 8" />
          </div>
          <svg width="21" height="12" viewBox="0 0 21 12" fill="#bdbdbd" aria-hidden="true">
            <path d="M16 1h2v2h-2zM12 5h2v2h-2zM16 5h2v2h-2zM8 9h2v2H8zM12 9h2v2h-2zM16 9h2v2h-2z" />
          </svg>
        </div>
      </div>
    </main>
  )
}

/* ---------- project browser ---------- */
const treeIcons = {
  views: <><Corners x={1.5} y={1.5} s={13} a={3} /><path d="M5.500 7l2-2.500h4V9l-2 2.500h-4z" fill="#e8eaee" /></>,
  legend: <><path d="M.500.500h15v15H.500z" fill="#eef0f3" /><path d="M0 2h16" strokeWidth="3" stroke="#5c6470" /><path d="M3 6.500h3v3H3z" fill={INK} /><circle cx="4.500" cy="12.500" r="1.500" fill="#777" /><path d="M8 6.500h6M8 9.500h4M8 12.500h6" /></>,
  schedule: <><path d="M.500 2.500h15v11h-15z" fill="#eef0f3" /><path d="M0 3.500h16" strokeWidth="2" stroke="#5c6470" /><path d="M1 7.500h14M1 10.500h14M4.500 4v10M8.500 4v10" stroke="#7d8794" /></>,
  sheets: <><path d="M.500 2.500h11l4 4v7H.500z" fill="#eef0f3" /><path d="M11.500 2.500v4h4M2.500 11.500v-6h7v6h-3v-3h-4M12.500 8.500v3" /></>,
  family: <><path d="M1.500 1.500h6v6h-6z" fill="#fff" /><path d="M10.500 1.500h4v13h-13v-4h9z" fill="#d5dae0" /></>,
  group: <><path d="M4 1.500H1.500v13H4M12 1.500h2.500v13H12" strokeWidth="1.500" /><circle cx="7" cy="7" r="3" fill="#dfe4ea" /><path d="M7.500 7.500l4-1 1 4-3 2.500-3-2z" fill="#aab4c2" /></>,
  link: <><rect x="1" y="5.500" width="7" height="5" rx="2.500" stroke="#c98a14" strokeWidth="2" fill="#ffe08a" /><rect x="8" y="5.500" width="7" height="5" rx="2.500" stroke="#c98a14" strokeWidth="2" fill="#ffe08a" /><path d="M5 8h6" stroke="#8a5a08" /></>,
}

const Expander = ({ open, label }) => (
  <button aria-label={`${open ? '折叠' : '展开'} ${label}`} className="absolute top-1.5 left-1 flex size-[9px] items-center justify-center border border-[#8c8c8c] bg-white">
    <svg width="5" height="5" viewBox="0 0 5 5" stroke="#34508a" aria-hidden="true"><path d={open ? 'M0 2.500h5' : 'M0 2.500h5M2.500 0v5'} /></svg>
  </button>
)

function Gutter({ toggle, first, last, label, wide }) {
  return (
    <span className={`relative h-5 shrink-0 ${wide ? 'w-6' : 'w-5'}`}>
      <span className={`absolute left-2 w-0 border-l border-dotted border-[#999] ${first ? 'top-2.5 bottom-0' : last ? 'top-0 h-2.5' : 'inset-y-0'}`} />
      <span className="absolute top-2.5 right-0 left-2 border-t border-dotted border-[#999]" />
      {toggle && <Expander open={toggle === 'open'} label={label} />}
    </span>
  )
}

const TREE = [
  { label: '明细表/数量 (全部)', icon: 'schedule', toggle: 'closed' },
  { label: '图纸 (全部)', icon: 'sheets' },
  { label: '族', icon: 'family', toggle: 'closed' },
  { label: '组', icon: 'group', toggle: 'closed' },
  { label: 'Revit 链接', icon: 'link', last: true },
]

function TreeRow({ label, icon, toggle, first, last, selected }) {
  return (
    <div className="flex h-5 items-center">
      <Gutter toggle={toggle} first={first} last={last} label={label} />
      <Svg>{treeIcons[icon]}</Svg>
      <span className={`ml-[3px] h-5 pr-1 pl-[3px] leading-5 ${selected ? 'bg-[#e0e0e0]' : ''}`}>{label}</span>
    </div>
  )
}

function ProjectBrowser() {
  return (
    <aside className="flex w-[371px] shrink-0 flex-col border-t-2 border-l-[3px] border-[#c4c4c4] bg-white text-xs text-black">
      <div className="flex h-5 shrink-0 items-center justify-between bg-[#eeeeee] pr-[3px] pl-[3px] text-[#333]">
        <h2>项目浏览器 - 项目1</h2>
        <button aria-label="关闭项目浏览器"><Svg size={10}><path d="M1 1l8 8M9 1L1 9" stroke="#222" strokeWidth="2" /></Svg></button>
      </div>
      <ul className="pl-px">
        <li>
          <TreeRow label="视图 (规程)" icon="views" toggle="open" first selected />
          <ul>
            {['协调', '卫浴', '机械'].map((t, i) => (
              <li key={t} className="flex h-5 items-center">
                <span className="relative h-5 w-5 shrink-0"><span className="absolute inset-y-0 left-2 border-l border-dotted border-[#999]" /></span>
                <Gutter toggle="closed" last={i === 2} label={t} wide />
                <span className="ml-px leading-5">{t}</span>
              </li>
            ))}
          </ul>
        </li>
        <li><TreeRow label="图例" icon="legend" /></li>
        {TREE.map((n) => <li key={n.label}><TreeRow {...n} /></li>)}
      </ul>
    </aside>
  )
}

/* ---------- status bar ---------- */
const POINTER = <path d="M8.500 6v9l2-2 1.500 3 1.500-1-1.500-2.500h3z" fill="#fff" stroke="#222" strokeWidth="0.800" />

function StatusSelect({ label, value }) {
  return (
    <div className="relative w-[204px] shrink-0">
      <select aria-label={label} className="block h-[18px] w-full appearance-none bg-white pl-0.5 text-xs leading-[18px] text-[#7a7a7a]">
        <option>{value}</option>
      </select>
      <span className="pointer-events-none absolute inset-y-0 right-0 flex w-[18px] items-center justify-center border-l border-[#ececec]">
        <svg width="9" height="5" viewBox="0 0 9 5" fill="none" stroke="#9a9a9a" aria-hidden="true"><path d="M.500.500l4 4 4-4" /></svg>
      </span>
    </div>
  )
}

function StatusBar() {
  return (
    <footer className="flex h-6 shrink-0 items-center bg-[#cbcbcb] pt-0.5 text-xs text-black">
      <p className='w-[49%] truncate pl-px font-["Noto_Sans","Noto_Sans_CJK_SC",sans-serif] leading-5'>
        单击可进行选择; 按 Tab 键并单击可选择其他项目; 按 Ctrl 键并单击可将新项目添加到选择集; 按 Shift 键并单击可取消选择。
      </p>
      <button aria-label="工作集" className="ml-[3px]">
        <Svg>
          <path d="M5.500 3.500l2-2h4v4l-2 2h-4z" fill="#b6e3a5" stroke="#2e7d32" />
          <path d="M.500 9.500l2-2h5v6l-2 2h-5z" fill="#6fc0ee" stroke="#1f5e96" />
          <path d="M10.500 6v3l1.500 1 1.500-1V6c3 2 1 4 0 5v4h-3v-4c-1-1-3-3 0-5z" fill="#e6edf5" stroke="#41639c" />
        </Svg>
      </button>
      <div className="ml-2"><StatusSelect label="活动工作集" value="" /></div>
      <Svg className="ml-2.5"><path d="M4.500 1.500h10v4h-10zM12 5.500L7 10" fill="#e6e6e6" stroke="#999" /><path d="M1 15c0-4 2-5 3-7 2 2 5 3 5 7z" fill="#999" stroke="#999" /></Svg>
      <span className="ml-1 w-7">:0</span>
      <button aria-label="设计选项" className="ml-1">
        <Svg><path d="M.500 1.500h15v13H.500z" fill="#fff" /><path d="M0 2.500h16" strokeWidth="3" /><path d="M2.500 6.500h2v2h-2zM6 7.500h7M7 10.500h6M9 12.500h4M5 9v3.500h3" /></Svg>
      </button>
      <Svg className="ml-2.5"><path d="M3 1h13v14H3z" fill="#999" stroke="#999" /><path d="M0 9.500h6v-3l4 4-4 4v-3H0z" fill="#ccc" stroke="#888" /></Svg>
      <div className="ml-2"><StatusSelect label="设计选项列表" value="主模型" /></div>
      <div className="mr-[79px] ml-auto flex items-center gap-2.5">
        <Svg><rect x="1" y="3" width="6" height="4" rx="2" stroke="#d8951c" strokeWidth="2" /><rect x="9" y="3" width="6" height="4" rx="2" stroke="#d8951c" strokeWidth="2" />{POINTER}</Svg>
        <Svg><path d="M1 9l6-7v7zM1 12h9" stroke="#2d6fae" fill="#dcecf9" /><path d="M10 1l5 5M15 1l-5 5" stroke="#c22a1c" strokeWidth="1.500" />{POINTER}</Svg>
        <Svg><path d="M3 2h8v5H3zM7 7v6" stroke="#c4672a" fill="#e69a5a" />{POINTER}</Svg>
        <Svg><path d="M2 2h6v11H2z" stroke="#2d6fae" /><path d="M10 1l4 4M14 1l-4 4" stroke="#c22a1c" strokeWidth="1.500" />{POINTER}</Svg>
        <Svg><path d="M5 1v8M1 5h8" />{POINTER}</Svg>
        <Svg><circle cx="8" cy="8" r="5" strokeDasharray="2 2" strokeWidth="2" stroke="#888" /></Svg>
        <Svg><path d="M1 2h14L9.500 8v6l-3-2V8z" /></Svg>
      </div>
    </footer>
  )
}

function Recorder() {
  return (
    <div className="absolute right-0 bottom-0 z-20 flex h-[46px] w-[215px] text-white">
      <div className="flex w-[120px] items-center justify-center bg-[#1a1a1a]/85 text-[21px] leading-none">00:00:24</div>
      <button aria-label="停止" className="flex w-[49px] items-center justify-center bg-[#0c0c0c]/95"><span className="size-5 bg-[#bcbcbc]" /></button>
      <button aria-label="暂停" className="relative flex flex-1 items-center justify-center gap-[5px] border-l border-[#2a2a2a] bg-[#0c0c0c]/95">
        <span className="h-5 w-[7px] bg-[#bcbcbc]" />
        <span className="h-5 w-[7px] bg-[#bcbcbc]" />
        <span className="absolute top-1 right-1 size-1 rounded-full bg-[#3fa88a]" />
      </button>
    </div>
  )
}

export default function App() {
  return (
    <div className='relative flex h-screen flex-col overflow-hidden bg-[#cbcbcb] font-["Open_Sans","Noto_Sans_CJK_SC",sans-serif]'>
      <Defs />
      <TitleBar />
      <TabStrip />
      <Ribbon />
      <div className="h-[26px] shrink-0 bg-[#eeeeee]" />
      <div className="flex min-h-0 flex-1">
        <PropertyPalette />
        <ViewArea />
        <ProjectBrowser />
      </div>
      <StatusBar />
      <AppMenu />
      <svg width="12" height="18" viewBox="0 0 12 18" className="absolute top-[93px] left-[37px] z-20" aria-hidden="true">
        <path d="M.500.500v14l3.500-3 3 5.500 2.500-1.500-3-5h5z" fill="#2aa0f0" stroke="#123" />
      </svg>
      <Recorder />
    </div>
  )
}
